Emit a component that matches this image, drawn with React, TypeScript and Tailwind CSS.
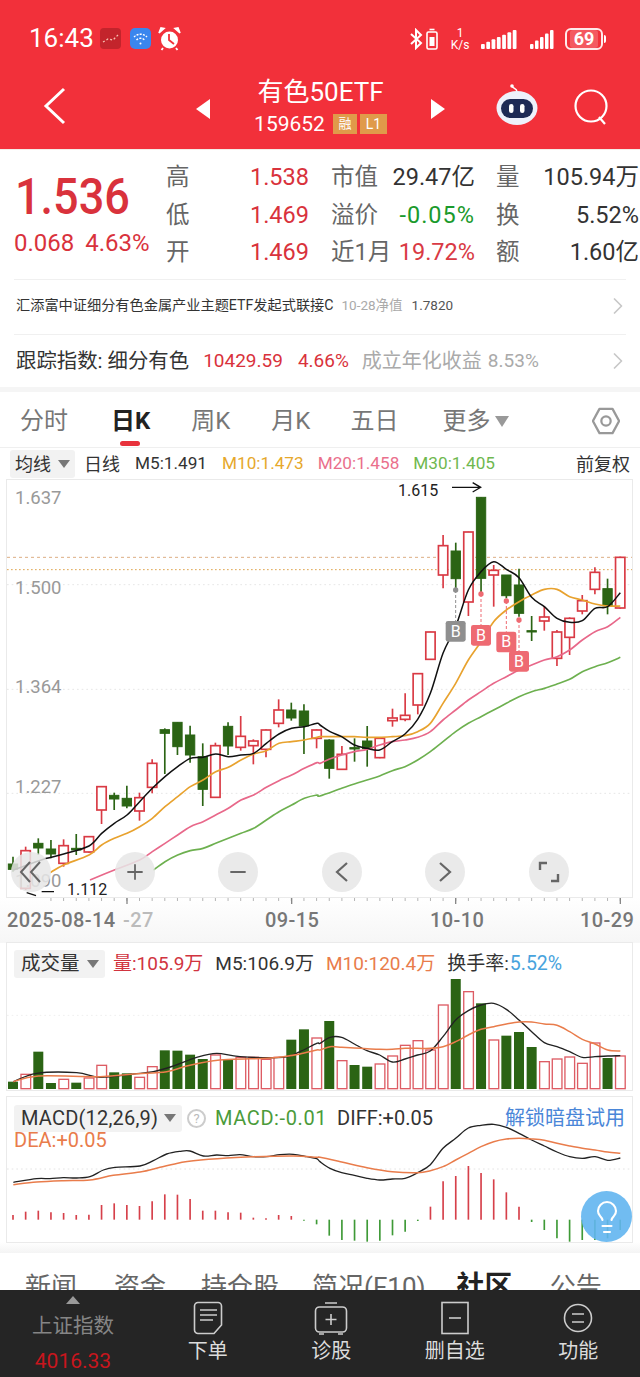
import { ChevronRight, Lightbulb, Minus, Plus } from 'lucide-react';

const RED = '#d93a44';
const GREEN = '#2b6414';
const colX = (i: number) => 39 + 37.95 * i;

// left half is given in chart units, right half is offset by 960; returns a smooth path
const pts = (left: number[][], right: number[][] = []) => {
  const p = [...left, ...right.map(([x, y]) => [x + 960, y])];
  let d = `M${p[0][0]} ${p[0][1]}`;
  for (let i = 0; i < p.length - 1; i++) {
    const a = p[i - 1] || p[i];
    const b = p[i];
    const c = p[i + 1];
    const e = p[i + 2] || c;
    const c1x = (b[0] + (c[0] - a[0]) / 6).toFixed(1);
    const c1y = (b[1] + (c[1] - a[1]) / 6).toFixed(1);
    const c2x = (c[0] - (e[0] - b[0]) / 6).toFixed(1);
    const c2y = (c[1] - (e[1] - b[1]) / 6).toFixed(1);
    d += ` C${c1x} ${c1y} ${c2x} ${c2y} ${c[0]} ${c[1]}`;
  }
  return d;
};

// [high, top, bottom, low, isUp] in 3x chart units
const candles: [number, number, number, number, number][] = [
  [1130, 1152, 1168, 1175, 0], [1100, 1112, 1225, 1230, 1], [1075, 1090, 1104, 1125, 0], [1080, 1107, 1122, 1135, 0],
  [1078, 1097, 1150, 1160, 1], [1062, 1105, 1110, 1125, 0], [1068, 1070, 1116, 1118, 1], [920, 920, 990, 1032, 1],
  [938, 946, 957, 990, 0], [917, 955, 978, 985, 0], [938, 953, 993, 1022, 1], [838, 850, 922, 940, 1],
  [745, 749, 760, 882, 0], [727, 727, 800, 825, 0], [737, 765, 825, 848, 0], [790, 830, 928, 978, 0],
  [788, 797, 952, 952, 1], [727, 739, 798, 825, 0], [708, 769, 802, 812, 1], [778, 783, 797, 853, 1],
  [748, 750, 808, 832, 1], [658, 690, 730, 742, 1], [668, 690, 714, 722, 0], [673, 693, 738, 822, 0],
  [748, 750, 775, 805, 1], [778, 780, 865, 896, 0], [798, 823, 868, 870, 1], [775, 803, 807, 845, 0],
  [738, 783, 806, 860, 0], [772, 775, 833, 835, 1], [686, 714, 722, 740, 1], [640, 706, 718, 724, 1],
  [580, 581, 675, 703, 1], [455, 456, 538, 538, 1], [165, 197, 285, 325, 1], [188, 213, 296, 325, 0],
  [155, 156, 366, 408, 1], [52, 52, 295, 340, 0], [255, 271, 285, 380, 1], [285, 285, 347, 355, 0],
  [266, 315, 400, 410, 0], [408, 452, 456, 483, 0], [378, 411, 423, 452, 1], [450, 456, 535, 558, 1],
  [412, 415, 472, 525, 1], [345, 362, 393, 403, 1], [262, 277, 328, 343, 1], [296, 326, 378, 403, 0],
  [230, 232, 384, 386, 1],
];

const m5 = pts(
  [[40, 1170], [100, 1148], [140, 1135], [191, 1122], [267, 1098], [305, 1060], [343, 1030], [381, 1005], [419, 965], [457, 925], [495, 890], [533, 860], [571, 835], [609, 832], [647, 822], [685, 830], [723, 825], [761, 820], [799, 790], [837, 762], [875, 745], [913, 740], [951, 730]],
  [[0, 735], [30, 755], [65, 770], [103, 795], [141, 805], [179, 810], [217, 785], [255, 762], [293, 718], [331, 640], [369, 520], [407, 440], [445, 330], [483, 275], [521, 245], [559, 268], [597, 293], [635, 352], [673, 380], [711, 415], [749, 427], [787, 422], [825, 385], [863, 380], [901, 338]],
);
const m10 = pts(
  [[150, 1178], [191, 1155], [267, 1125], [305, 1095], [343, 1075], [381, 1060], [419, 1040], [457, 1015], [495, 980], [533, 950], [571, 920], [609, 900], [647, 875], [685, 862], [723, 840], [761, 822], [799, 812], [837, 790], [875, 785], [913, 780], [951, 772]],
  [[0, 770], [27, 770], [65, 770], [103, 770], [141, 772], [179, 772], [217, 770], [255, 767], [293, 755], [331, 730], [369, 670], [407, 610], [445, 540], [483, 485], [521, 425], [559, 390], [597, 365], [635, 345], [673, 328], [711, 328], [749, 350], [787, 360], [825, 372], [863, 378], [901, 378]],
);
const m20 = pts(
  [[270, 1200], [343, 1170], [419, 1140], [457, 1115], [495, 1090], [533, 1065], [571, 1040], [609, 1025], [647, 1005], [685, 985], [723, 960], [761, 945], [799, 922], [837, 902], [875, 885], [913, 865], [951, 848]],
  [[0, 850], [27, 838], [65, 825], [103, 815], [141, 808], [179, 795], [217, 785], [255, 780], [293, 772], [331, 755], [369, 720], [407, 690], [445, 660], [483, 635], [521, 610], [559, 590], [597, 570], [635, 555], [673, 540], [711, 530], [749, 510], [787, 480], [825, 455], [863, 440], [901, 412]],
);
const m30 = pts(
  [[460, 1170], [495, 1145], [533, 1125], [571, 1112], [609, 1105], [647, 1090], [685, 1075], [723, 1060], [761, 1045], [799, 1020], [837, 995], [875, 975], [913, 955], [951, 945]],
  [[0, 948], [65, 925], [103, 912], [141, 900], [179, 888], [217, 872], [255, 860], [293, 840], [331, 815], [369, 785], [407, 755], [445, 730], [483, 710], [521, 690], [559, 670], [597, 650], [635, 635], [673, 625], [711, 612], [749, 598], [787, 575], [825, 560], [863, 548], [901, 532]],
);

// volume bar tops, negative means green
const volumes = [
  -425, 403, -335, -429, 418, -428, 414, 376, -397, -400, 412, 380, -331, -332, -344, -357, 345, -358, 352, 352, 358, 352, -299, -268, 294,
  -243, 362, -375, -380, 372, 348, 316, 302, 330, 195, -117, 155, -190, 300, -287, -276, -321, 365, 357, 351, 370, 309, -354, 348,
];
const volBlack = pts(
  [[40, 425], [110, 400], [230, 398], [300, 412], [400, 402], [460, 395], [520, 378], [590, 352], [650, 340], [720, 350], [850, 352], [900, 335], [950, 310]],
  [[0, 310], [30, 292], [65, 292], [103, 312], [141, 332], [179, 345], [217, 366], [255, 357], [293, 345], [331, 333], [369, 290], [407, 240], [445, 212], [483, 195], [521, 190], [559, 208], [597, 240], [635, 275], [673, 308], [711, 320], [749, 335], [787, 352], [825, 350], [863, 348], [901, 347]],
);
const volOrange = pts(
  [[40, 425], [115, 408], [300, 410], [400, 402], [500, 395], [560, 378], [640, 362], [700, 358], [800, 355], [850, 350], [900, 342], [950, 330]],
  [[0, 330], [30, 320], [65, 322], [103, 324], [141, 326], [179, 328], [217, 328], [255, 325], [293, 325], [331, 325], [369, 320], [407, 305], [445, 285], [483, 268], [521, 260], [559, 252], [597, 246], [635, 246], [673, 252], [711, 256], [749, 275], [787, 298], [825, 312], [863, 330], [901, 333]],
);

const macdBars = [
  825, 815, 812, 817, 819, 825, 824, 795, 790, 795, 798, 784, 763, 764, 777, 812, 812, 817, 818, 833, 835, 825, 828, 842, 853,
  887, 900, 902, 905, 902, 886, 875, 843, 800, 724, 708, 678, 699, 718, 757, 800, 846, 870, 895, 905, 900, 900, 895, 870,
];
const diffLine = pts(
  [[40, 727], [110, 716], [150, 716], [190, 713], [230, 714], [270, 710], [310, 690], [345, 682], [420, 678], [460, 662], [500, 642], [540, 634], [570, 633], [610, 648], [650, 645], [685, 647], [720, 644], [760, 650], [800, 650], [840, 644], [880, 643], [920, 650], [950, 656]],
  [[0, 665], [30, 685], [65, 698], [103, 706], [141, 715], [179, 720], [217, 717], [255, 715], [293, 698], [331, 674], [369, 625], [407, 595], [445, 564], [483, 556], [521, 553], [559, 562], [597, 580], [635, 600], [673, 618], [711, 636], [749, 650], [787, 655], [825, 650], [863, 661], [901, 654]],
);
const deaLine = pts(
  [[40, 734], [110, 726], [190, 722], [270, 720], [340, 706], [420, 696], [480, 682], [540, 668], [580, 662], [680, 654], [760, 650], [880, 648], [950, 652]],
  [[0, 652], [65, 666], [141, 683], [217, 695], [293, 698], [331, 692], [369, 680], [407, 660], [445, 640], [483, 620], [521, 605], [559, 597], [597, 595], [635, 597], [673, 601], [711, 610], [749, 618], [787, 625], [825, 630], [863, 636], [901, 640]],
);

const markers = [
  { x: 1367, dot: 330, top: 423, bottom: 485, color: '#8f8f8f' },
  { x: 1443, dot: 342, top: 435, bottom: 497, color: '#ee6a72' },
  { x: 1519, dot: 363, top: 455, bottom: 517, color: '#ee6a72' },
  { x: 1557, dot: 420, top: 513, bottom: 575, color: '#ee6a72' },
];

function KChart() {
  return (
    <svg viewBox="21 0 1875 1251" className="block w-full h-full">
      {[314, 628, 940].map((y) => (
        <line key={y} x1="21" x2="1896" y1={y} y2={y} stroke="#e6e6e6" strokeWidth="3" strokeDasharray="5 9" />
      ))}
      <line x1="21" x2="1896" y1="232" y2="232" stroke="#dcae84" strokeWidth="3" strokeDasharray="9 9" />
      <line x1="21" x2="1896" y1="269" y2="269" stroke="#dfa550" strokeWidth="3" strokeDasharray="5 7" />
      {candles.map(([high, top, bottom, low, up], i) => {
        const x = colX(i);
        const color = up ? RED : GREEN;
        return (
          <g key={i}>
            <line x1={x} x2={x} y1={high} y2={low} stroke={color} strokeWidth="5" />
            <rect
              x={x - 14}
              y={top}
              width="28"
              height={bottom - top}
              fill={up ? '#fff' : GREEN}
              stroke={color}
              strokeWidth={up ? 5 : 3}
            />
          </g>
        );
      })}
      <path d={m30} fill="none" stroke="#6db04f" strokeWidth="5" />
      <path d={m20} fill="none" stroke="#e8688a" strokeWidth="5" />
      <path d={m10} fill="none" stroke="#e8a22e" strokeWidth="5" />
      <path d={m5} fill="none" stroke="#111" strokeWidth="4.5" />
      {markers.map((m) => (
        <g key={m.x}>
          <line x1={m.x} x2={m.x} y1={m.dot} y2={m.top} stroke={m.color} strokeWidth="3" strokeDasharray="9 6" />
          <circle cx={m.x} cy={m.dot} r="8" fill={m.color} />
          <rect x={m.x - 30} y={m.top} width="60" height={m.bottom - m.top} rx="7" fill={m.color} />
          <text x={m.x} y={m.top + 47} textAnchor="middle" fontSize="48" fill="#fff">B</text>
        </g>
      ))}
      <path d="M1356 22 H1442 M1418 8 L1442 22 L1418 36" fill="none" stroke="#111" strokeWidth="4" />
      <path d="M162 1235 H125 M108 1247 L80 1238" fill="none" stroke="#111" strokeWidth="4" />
    </svg>
  );
}

function VolumeChart() {
  return (
    <svg viewBox="21 114 1875 336" className="block w-full h-[112px]">
      <line x1="21" x2="1896" y1="226" y2="226" stroke="#efefef" strokeWidth="3" strokeDasharray="5 9" />
      {volumes.map((v, i) => {
        const x = colX(i);
        const top = Math.abs(v);
        return v < 0 ? (
          <rect key={i} x={x - 15} y={top} width="30" height={447 - top} fill={GREEN} />
        ) : (
          <rect key={i} x={x - 14} y={top} width="29" height={446 - top} fill="#fff" stroke="#dd5c64" strokeWidth="4" />
        );
      })}
      <path d={volBlack} fill="none" stroke="#222" strokeWidth="4" />
      <path d={volOrange} fill="none" stroke="#e97c4b" strokeWidth="4.5" />
    </svg>
  );
}

function MacdChart() {
  return (
    <svg viewBox="21 471 1875 435" className="block w-full h-full">
      <line x1="21" x2="1896" y1="687" y2="687" stroke="#e4e4e4" strokeWidth="3" strokeDasharray="5 9" />
      {macdBars.map((y, i) => (
        <line key={i} x1={colX(i)} x2={colX(i)} y1="839" y2={y} stroke={y < 839 ? '#d6404a' : '#3f9a37'} strokeWidth="5" />
      ))}
      <path d={diffLine} fill="none" stroke="#222" strokeWidth="4" />
      <path d={deaLine} fill="none" stroke="#e97c4b" strokeWidth="4.5" />
    </svg>
  );
}

function Signal({ bars, width }: { bars: number; width: number }) {
  return (
    <svg width={width} height="20" viewBox={`0 0 ${width} 20`} fill="#fff">
      {Array.from({ length: bars }).map((_, i) => {
        const h = 5 + (i * 14) / (bars - 1);
        return <rect key={i} x={i * (width / bars)} y={20 - h} width={width / bars - 1.5} height={h} rx="1" />;
      })}
    </svg>
  );
}

function StatusBar() {
  return (
    <div className="h-[77px] flex items-center pl-[29px] pr-[34px] text-white">
      <span className="text-[26px] w-[71px]">16:43</span>
      <span className="w-[21px] h-[21px] rounded-[4px] bg-[#c3242c] flex items-center justify-center">
        <svg width="17" height="10" viewBox="0 0 17 10" fill="none" stroke="#f7c0b0" strokeWidth="1.3" strokeDasharray="2 2">
          <path d="M1 8 L6 5 L11 6 L16 1" />
        </svg>
      </span>
      <span className="ml-[9px] w-[21px] h-[21px] rounded-[5px] bg-[#3a86ee] flex items-center justify-center">
        <svg width="15" height="14" viewBox="0 0 15 14" fill="none" stroke="#fff" strokeWidth="1.4" strokeDasharray="2 1.2">
          <path d="M1 5 A9 9 0 0 1 14 5 M3.5 8 A5.5 5.5 0 0 1 11.5 8" />
          <circle cx="7.5" cy="11.5" r="1" fill="#fff" stroke="none" />
        </svg>
      </span>
      <svg className="ml-[7px]" width="23" height="24" viewBox="0 0 23 24" fill="#fff">
        <circle cx="11.5" cy="13" r="8.5" />
        <path d="M1 6 L6 1.5 L3 1 Z M22 6 L17 1.5 L20 1 Z" stroke="#fff" strokeWidth="1.6" />
        <path d="M11 7 V13 L16 17" fill="none" stroke="#f2303a" strokeWidth="1.8" />
        <path d="M5 21 L3.5 23 M18 21 L19.5 23" stroke="#fff" strokeWidth="1.8" />
      </svg>
      <div className="ml-auto flex items-center">
        <svg width="13" height="22" viewBox="0 0 13 22" fill="none" stroke="#fff" strokeWidth="2">
          <path d="M1 6 L11 15 L6 20 V2 L11 7 L1 16" />
        </svg>
        <svg className="ml-[3px]" width="12" height="22" viewBox="0 0 12 22" fill="none" stroke="#fff" strokeWidth="1.6">
          <rect x="1" y="4" width="10" height="17" rx="1.5" />
          <path d="M3.5 1.5 H8.5" />
          <rect x="3.5" y="9" width="5" height="9" fill="#fff" stroke="none" />
        </svg>
        <span className="ml-[11px] w-[22px] flex flex-col items-center leading-[12px] text-[12px]">
          <span>1</span>
          <span>K/s</span>
        </span>
        <span className="ml-[10px]"><Signal bars={7} width={37} /></span>
        <span className="ml-[12px]"><Signal bars={5} width={25} /></span>
        <span className="ml-[10px] w-[38px] h-[22px] rounded-[6px] border-2 border-white/90 flex items-center justify-center text-[18px] font-bold leading-none">
          <span className="bg-white/20 rounded-[3px] px-[4px]">69</span>
        </span>
        <span className="ml-[1px] w-[2px] h-[8px] bg-white rounded-r-sm" />
      </div>
    </div>
  );
}

function NavBar() {
  return (
    <div className="h-[72px] flex items-start text-white">
      <svg className="mt-[10px] ml-[43px]" width="23" height="38" viewBox="0 0 23 38" fill="none" stroke="#fff" strokeWidth="3">
        <path d="M21 2 L3 19 L21 36" />
      </svg>
      <span className="mt-[22px] ml-[130px] w-0 h-0 border-y-[10px] border-y-transparent border-r-[14px] border-r-white" />
      <div className="w-[221px] flex flex-col items-center">
        <span className="text-[26px] leading-[30px]">有色50ETF</span>
        <div className="flex items-center mt-[6px] h-[22px]">
          <span className="text-[21px] leading-none">159652</span>
          <span className="ml-[8px] w-[24px] h-[20px] bg-[#e09a4a] text-[13px] text-center leading-[20px]">融</span>
          <span className="ml-[3px] w-[27px] h-[20px] bg-[#e09a4a] text-[14px] text-center leading-[20px]">L1</span>
        </div>
      </div>
      <span className="mt-[22px] w-0 h-0 border-y-[10px] border-y-transparent border-l-[14px] border-l-white" />
      <svg className="mt-[6px] ml-[51px]" width="42" height="46" viewBox="0 0 42 46">
        <path d="M21 9 C21 5 17 6 16 3" fill="none" stroke="#fff" strokeWidth="1.5" />
        <circle cx="16" cy="3" r="1.8" fill="#fff" />
        <ellipse cx="21" cy="25" rx="20.5" ry="17" fill="#eef1fb" />
        <rect x="5" y="16" width="32" height="19" rx="9.5" fill="#1e2a55" />
        <rect x="13" y="21" width="4.5" height="9" rx="2.2" fill="#fff" />
        <rect x="24" y="21" width="4.5" height="9" rx="2.2" fill="#fff" />
      </svg>
      <svg className="mt-[11px] ml-[34px]" width="38" height="38" viewBox="0 0 38 38" fill="none" stroke="#fff" strokeWidth="2.2">
        <circle cx="19" cy="18" r="15.5" />
        <path d="M27 29 L33 36" />
      </svg>
    </div>
  );
}

function QuoteBlock() {
  const rows = [
    { a: '高', b: '1.538', c: '市值', d: '29.47亿', dc: 'text-[#333]', e: '量', f: '105.94万' },
    { a: '低', b: '1.469', c: '溢价', d: '-0.05%', dc: 'text-[#1a9a2c] tracking-[1px]', e: '换', f: '5.52%' },
    { a: '开', b: '1.469', c: '近1月', d: '19.72%', dc: 'text-[#d93a44]', e: '额', f: '1.60亿' },
  ];
  return (
    <div className="h-[129px] flex">
      <div className="w-[166px] shrink-0 pl-[15px] pt-[17px]">
        <div className="text-[50px] leading-[60px] font-medium text-[#d9323c] scale-x-[0.9] origin-left">1.536</div>
        <div className="flex text-[24px] leading-[32px] text-[#d9323c] -ml-[1px]">
          <span>0.068</span>
          <span className="ml-[11px]">4.63%</span>
        </div>
      </div>
      <div className="pt-[9px] flex flex-col">
        {rows.map((r) => (
          <div key={r.a} className="h-[37.5px] flex items-center text-[23.5px] text-[#666]">
            <div className="w-[143px] flex justify-between">
              <span>{r.a}</span>
              <span className="text-[#d9323c]">{r.b}</span>
            </div>
            <div className="ml-[22px] w-[144px] flex justify-between">
              <span>{r.c}</span>
              <span className={r.dc}>{r.d}</span>
            </div>
            <div className="ml-[21px] w-[143px] flex justify-between">
              <span>{r.e}</span>
              <span className="text-[#333]">{r.f}</span>
            </div>
          </div>
        ))}
      </div>
    </div>
  );
}

function Tabs() {
  return (
    <div className="h-[56px] flex items-center pt-[3px] text-[24px] text-[#777] border-b border-[#efefef] relative">
      <span className="ml-[20px]">分时</span>
      <span className="ml-[43px] text-[#222] font-bold">日K</span>
      <span className="ml-[41px]">周K</span>
      <span className="ml-[41px]">月K</span>
      <span className="ml-[40px]">五日</span>
      <span className="ml-[44px]">更多</span>
      <span className="ml-[5px] w-0 h-0 border-x-[7px] border-x-transparent border-t-[11px] border-t-[#999]" />
      <svg className="ml-auto mr-[20px]" width="28" height="30" viewBox="0 0 30 32" fill="none" stroke="#999" strokeWidth="2.4">
        <path d="M8 3 H22 L29 16 L22 29 H8 L1 16 Z" strokeLinejoin="round" />
        <circle cx="15" cy="16" r="5" />
      </svg>
      <span className="absolute left-[120px] bottom-[1px] w-[20px] h-[5px] rounded-full bg-[#e8323c]" />
    </div>
  );
}

function Chip({ label, className }: { label: string; className: string }) {
  return (
    <span className={`flex items-center justify-between rounded-[3px] bg-[#f2f2f2] text-[#333] ${className}`}>
      <span>{label}</span>
      <span className="w-0 h-0 border-x-[6px] border-x-transparent border-t-[8px] border-t-[#777]" />
    </span>
  );
}

function MaLegend() {
  return (
    <div className="h-[32px] flex items-center text-[17.2px] text-[#333]">
      <Chip label="均线" className="ml-[10px] w-[65px] h-[28px] pl-[5px] pr-[5px] text-[18px]" />
      <span className="ml-[9px] text-[18px]">日线</span>
      <span className="ml-[15px]">M5:1.491</span>
      <span className="ml-[15px] text-[#e6a82c]">M10:1.473</span>
      <span className="ml-[14px] text-[#ea6f8c]">M20:1.458</span>
      <span className="ml-[14px] text-[#6fb84f]">M30:1.405</span>
      <span className="ml-auto mr-[10px] text-[18px]">前复权</span>
    </div>
  );
}

function RoundBtn({ children, className = '' }: { children: React.ReactNode; className?: string }) {
  return (
    <span className={`w-[40px] h-[40px] rounded-full bg-[#e6e6e6]/85 text-[#666] flex items-center justify-center ${className}`}>
      {children}
    </span>
  );
}

function KPanel() {
  const labels = [
    { t: '1.637', cls: 'top-[6px]' },
    { t: '1.500', cls: 'top-[96px]' },
    { t: '1.364', cls: 'top-[195px]' },
    { t: '1.227', cls: 'top-[295px]' },
    { t: '1.090', cls: 'top-[389px]' },
  ];
  return (
    <div className="relative mx-[7px] h-[417px] w-[625px] outline outline-[#eaeaea]">
      <KChart />
      {labels.map((l) => (
        <span key={l.t} className={`absolute left-[8px] text-[18.5px] leading-[24px] text-[#999] ${l.cls}`}>{l.t}</span>
      ))}
      <span className="absolute left-[391px] top-[0px] text-[16px] leading-[22px] text-[#222]">1.615</span>
      <span className="absolute left-[60px] bottom-[-4px] text-[16px] leading-[22px] text-[#222]">1.112</span>
      <div className="absolute left-[4px] bottom-[5px] flex gap-[63.5px]">
        <RoundBtn className="bg-[#e6e6e6]/70">
          <svg width="26" height="24" viewBox="0 0 26 24" fill="none" stroke="#666" strokeWidth="2">
            <path d="M12 2 L3 12 L12 22 M22 2 L13 12 L22 22" />
          </svg>
        </RoundBtn>
        <RoundBtn><Plus size={24} strokeWidth={1.8} /></RoundBtn>
        <RoundBtn><Minus size={24} strokeWidth={1.8} /></RoundBtn>
        <RoundBtn>
          <svg width="16" height="22" viewBox="0 0 16 22" fill="none" stroke="#666" strokeWidth="2.2">
            <path d="M13 2 L3 11 L13 20" />
          </svg>
        </RoundBtn>
        <RoundBtn>
          <svg width="16" height="22" viewBox="0 0 16 22" fill="none" stroke="#666" strokeWidth="2.2">
            <path d="M3 2 L13 11 L3 20" />
          </svg>
        </RoundBtn>
        <RoundBtn>
          <svg width="22" height="22" viewBox="0 0 22 22" fill="none" stroke="#666" strokeWidth="2.4">
            <path d="M2 9 V2 H9 M20 13 V20 H13" />
          </svg>
        </RoundBtn>
      </div>
    </div>
  );
}

function AxisRow() {
  return (
    <div className="h-[46px] bg-linear-to-b from-white to-[#f6f6f6]">
      <svg viewBox="0 0 1920 21" className="block w-full h-[7px]">
        {candles.map((_, i) =>
          i > 2 ? <line key={i} x1={colX(i)} x2={colX(i)} y1="0" y2="12" stroke="#b5b5b5" strokeWidth="3" /> : null,
        )}
        {[381, 875, 1367, 1861].map((x) => (
          <line key={x} x1={x} x2={x} y1="0" y2="21" stroke="#888" strokeWidth="4" />
        ))}
      </svg>
      <div className="flex text-[20px] tracking-[0.4px] leading-[24px] text-[#777] font-medium pl-[7px] mt-[4px]">
        <span className="w-[116px]">2025-08-14</span>
        <span className="text-[#bbb] w-[142px]">-27</span>
        <span className="w-[165px]">09-15</span>
        <span className="w-[150px]">10-10</span>
        <span>10-29</span>
      </div>
    </div>
  );
}

function VolumePanel() {
  return (
    <div className="mx-[7px] h-[147px] w-[625px] outline outline-[#eaeaea]">
      <div className="h-[35px] pt-[7px] flex items-center text-[19px]">
        <Chip label="成交量" className="ml-[7px] w-[91px] h-[28px] pl-[7px] pr-[6px] text-[19.5px]" />
        <span className="ml-[8px] text-[#d1343f]">量:105.9万</span>
        <span className="ml-[12px] text-[#333]">M5:106.9万</span>
        <span className="ml-[12px] text-[#e97c4b]">M10:120.4万</span>
        <span className="ml-[12px] text-[#333]">换手率:</span>
        <span className="ml-[1px] text-[#48a3dd] text-[19.5px]">5.52%</span>
      </div>
      <VolumeChart />
    </div>
  );
}

function MacdPanel() {
  return (
    <div className="relative mx-[7px] mt-[7px] h-[145px] w-[625px] outline outline-[#eaeaea]">
      <MacdChart />
      <div className="absolute left-[7px] right-[7px] top-[6px] flex items-center text-[20px]">
        <Chip label="MACD(12,26,9)" className="w-[168px] h-[27px] pl-[7px] pr-[6px] text-[20px] tracking-[0.2px]" />
        <span className="ml-[5px] w-[19px] h-[19px] rounded-full border-2 border-[#ccc] text-[#bbb] text-[13px] leading-[15px] text-center">?</span>
        <span className="ml-[9px] text-[#4b9b3a] tracking-[0.6px]">MACD:-0.01</span>
        <span className="ml-[10px] text-[#333]">DIFF:+0.05</span>
        <span className="ml-auto text-[#4a86d8] text-[20px]">解锁暗盘试用</span>
      </div>
      <span className="absolute left-[7px] top-[31px] text-[20px] leading-[24px] text-[#e97c4b]">DEA:+0.05</span>
      <span className="absolute left-[574px] top-[94px] w-[51px] h-[51px] rounded-full bg-[#62b5f0]/90 flex items-center justify-center text-white">
        <Lightbulb size={36} strokeWidth={1.4} />
      </span>
    </div>
  );
}

function BottomTabs() {
  return (
    <div className="h-[37px] overflow-hidden flex text-[26px] leading-[32px] text-[#666] pt-[18px]">
      <span className="ml-[25px]">新闻</span>
      <span className="ml-[37px]">资金</span>
      <span className="ml-[35px]">持仓股</span>
      <span className="ml-[33px]">简况(F10)</span>
      <span className="ml-[31px] text-[28px] font-bold text-[#222]">社区</span>
      <span className="ml-[37px]">公告</span>
    </div>
  );
}

function FooterBar() {
  return (
    <div className="h-[87px] bg-[#252525] flex text-[#dcdcdc] text-[20px]">
      <div className="w-[146px] shrink-0 flex flex-col items-center pt-[6px]">
        <span className="w-0 h-0 border-x-[7px] border-x-transparent border-b-[8px] border-b-[#999]" />
        <span className="text-[#858585] text-[20.5px] leading-[30px] mt-[7px]">上证指数</span>
        <span className="text-[#c8161d] text-[21px] leading-[28px] mt-[6px]">4016.33</span>
      </div>
      <div className="flex-1 grid grid-cols-4">
        {[
          {
            label: '下单',
            icon: (
              <svg width="30" height="34" viewBox="0 0 30 34" fill="none" stroke="#ccc" strokeWidth="1.6">
                <path d="M5 1.5 H25 A3.5 3.5 0 0 1 28.5 5 V24 L21 32.5 H5 A3.5 3.5 0 0 1 1.5 29 V5 A3.5 3.5 0 0 1 5 1.5 Z" />
                <path d="M7 9 H24 M7 14 H24 M7 19 H20" />
              </svg>
            ),
          },
          {
            label: '诊股',
            icon: (
              <svg width="34" height="34" viewBox="0 0 34 34" fill="none" stroke="#ccc" strokeWidth="1.6">
                <rect x="1.5" y="6" width="31" height="25" rx="4" />
                <path d="M11 2 H23 M17 13 V24 M11.5 18.5 H22.5 M5 33 H10 M24 33 H29" />
              </svg>
            ),
          },
          {
            label: '删自选',
            icon: (
              <svg width="30" height="34" viewBox="0 0 30 34" fill="none" stroke="#ccc" strokeWidth="1.6">
                <rect x="2" y="1.5" width="26" height="31" />
                <path d="M9 17 H21" />
              </svg>
            ),
          },
          {
            label: '功能',
            icon: (
              <svg width="30" height="34" viewBox="0 0 30 34" fill="none" stroke="#ccc" strokeWidth="1.6">
                <circle cx="15" cy="17" r="13.5" />
                <path d="M9 13 H21 M9 21 H21" />
              </svg>
            ),
          },
        ].map((item) => (
          <div key={item.label} className="flex flex-col items-center pt-[11px]">
            {item.icon}
            <span className="leading-[28px] mt-[2px]">{item.label}</span>
          </div>
        ))}
      </div>
    </div>
  );
}

export default function App() {
  return (
    <div className="w-[640px] h-[1377px] overflow-hidden bg-white font-['Roboto','Noto_Sans_CJK_SC',sans-serif]">
      <div className="h-[149px] bg-[#f2303a]">
        <StatusBar />
        <NavBar />
      </div>
      <div className="h-px bg-[#f3ece6]" />
      <QuoteBlock />
      <div className="mx-[14px] h-[55px] pb-[3px] border-t border-[#f0f0f0] flex items-center pl-[2px] pr-[2px]">
        <span className="text-[14.2px] text-[#333]">汇添富中证细分有色金属产业主题ETF发起式联接C</span>
        <span className="ml-[8px] text-[13.5px] text-[#aaa]">10-28净值</span>
        <span className="ml-[9px] text-[13.5px] text-[#555]">1.7820</span>
        <ChevronRight className="ml-auto mr-[-8px] text-[#c8c8c8]" size={28} strokeWidth={1.5} />
      </div>
      <div className="mx-[14px] h-[53px] border-t border-[#f0f0f0] flex items-center px-[2px] text-[20.4px]">
        <span className="text-[#333]">跟踪指数: 细分有色</span>
        <span className="ml-[14px] text-[#d9323c] text-[19px]">10429.59</span>
        <span className="ml-[15px] text-[#d9323c] text-[19px]">4.66%</span>
        <span className="ml-[13px] text-[#aaa] text-[20px]">成立年化收益</span>
        <span className="ml-[6px] text-[#aaa] text-[19px]">8.53%</span>
        <ChevronRight className="ml-auto mr-[-8px] text-[#c8c8c8]" size={28} strokeWidth={1.5} />
      </div>
      <div className="h-[5px] bg-[#f5f5f5]" />
      <Tabs />
      <MaLegend />
      <KPanel />
      <AxisRow />
      <VolumePanel />
      <MacdPanel />
      <div className="h-[11px] bg-linear-to-b from-white to-[#f4f4f4]" />
      <BottomTabs />
      <FooterBar />
    </div>
  );
}
